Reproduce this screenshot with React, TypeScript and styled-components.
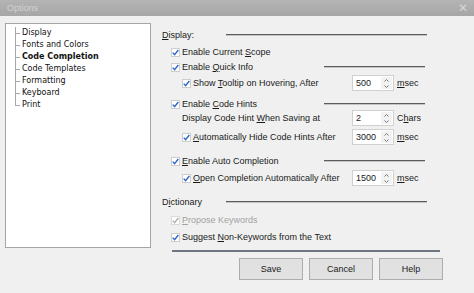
import styled, { createGlobalStyle } from "styled-components";

const GlobalStyle = createGlobalStyle`
  html, body {
    margin: 0;
    padding: 0;
    background: #f0f0f0;
  }
  body {
    font-family: "Liberation Sans", Arial, sans-serif;
  }
`;

const Window = styled.div`
  width: 474px;
  height: 293px;
  display: flex;
  flex-direction: column;
  background: #f0f0f0;
  overflow: hidden;
  color: #1a1a1a;
`;

const TitleBar = styled.div`
  height: 16px;
  flex: 0 0 16px;
  display: flex;
  align-items: center;
  justify-content: space-between;
  padding: 0 6px 0 7px;
  background: linear-gradient(#b4b4b4, #a6a6a6);
  color: #d2d2d2;
  font-size: 9px;
`;

const Close = styled.span`
  font-size: 12px;
  line-height: 1;
  color: #d6d6d6;
`;

const Body = styled.div`
  flex: 1;
  display: flex;
  padding-top: 7px;
  min-height: 0;
`;

const TreeBox = styled.div`
  width: 146px;
  height: 225px;
  margin-left: 5px;
  box-sizing: border-box;
  border: 1px solid #a5a5a5;
  background: #fff;
  padding-top: 3px;
`;

const TreeItem = styled.div<{ $bold?: boolean; $last?: boolean }>`
  position: relative;
  height: 12px;
  line-height: 12px;
  padding-left: 16px;
  font-family: "DejaVu Sans", "Liberation Sans", sans-serif;
  font-size: 8px;
  font-weight: ${(p) => (p.$bold ? 700 : 400)};
  color: #111;
  white-space: nowrap;

  &::before {
    content: "";
    position: absolute;
    left: 9px;
    top: 6px;
    width: 5px;
    border-top: 1px solid #a8a8a8;
  }

  &::after {
    content: "";
    position: absolute;
    left: 9px;
    top: 0;
    height: ${(p) => (p.$last ? "6px" : "12px")};
    border-left: 1px solid #a8a8a8;
  }
`;

const Panel = styled.div`
  flex: 1;
  display: flex;
  flex-direction: column;
  padding-left: 11px;
  padding-top: 4px;
  font-size: 9px;
`;

const Row = styled.div<{ $gap?: number; $indent?: number }>`
  height: 16px;
  display: flex;
  align-items: center;
  margin-top: ${(p) => p.$gap ?? 0}px;
  padding-left: ${(p) => p.$indent ?? 0}px;
  white-space: nowrap;
`;

const SpinRow = styled.div<{ $gap?: number }>`
  height: 16px;
  display: grid;
  grid-template-columns: 190px 42px auto;
  align-items: center;
  margin-top: ${(p) => p.$gap ?? 0}px;
  white-space: nowrap;
`;

const Cell = styled.div<{ $indent?: number }>`
  display: flex;
  align-items: center;
  padding-left: ${(p) => p.$indent ?? 0}px;
`;

const HeaderLabel = styled.span`
  width: 64px;
  flex: 0 0 64px;
`;

const Rule = styled.div`
  flex: 1;
  height: 1px;
  background: #5c5c5c;
  border-bottom: 1px solid #c4c4c4;
  margin-right: 47px;
`;

const SubRule = styled.div`
  width: 101px;
  height: 1px;
  margin-left: auto;
  margin-right: 49px;
  background: #5c5c5c;
  border-bottom: 1px solid #c4c4c4;
`;

const Text = styled.span<{ $disabled?: boolean }>`
  color: ${(p) => (p.$disabled ? "#a3a3a3" : "#1a1a1a")};
`;

const Mn = styled.span`
  text-decoration: underline;
  text-underline-offset: 1px;
`;

const Box = styled.span<{ $disabled?: boolean }>`
  width: 9px;
  height: 9px;
  flex: 0 0 9px;
  box-sizing: border-box;
  margin-right: 2px;
  border: 1px solid ${(p) => (p.$disabled ? "#dadada" : "#cdcdcd")};
  background: #fff;
  display: flex;
  align-items: center;
  justify-content: center;
`;

const Spin = styled.div`
  height: 16px;
  box-sizing: border-box;
  border: 1px solid #d0d0d0;
  background: #fff;
  display: flex;
`;

const SpinValue = styled.span`
  flex: 1;
  padding-left: 3px;
  line-height: 14px;
`;

const SpinArrows = styled.div`
  width: 11px;
  margin: 1px;
  background: #f2f2f2;
  display: flex;
  flex-direction: column;
  align-items: center;
  justify-content: space-around;
`;

const Unit = styled.span`
  padding-left: 3px;
`;

const Separator = styled.div`
  height: 2px;
  margin: 5px 34px 0 10px;
  background: #6d7580;
`;

const Buttons = styled.div`
  display: flex;
  justify-content: flex-end;
  gap: 6px;
  margin-top: 6px;
  margin-right: 31px;
`;

const Button = styled.div`
  width: 64px;
  height: 22px;
  box-sizing: border-box;
  border: 1px solid #adadad;
  background: #e1e1e1;
  display: flex;
  align-items: center;
  justify-content: center;
  font-size: 9px;
`;

function Check({ disabled }: { disabled?: boolean }) {
  return (
    <Box $disabled={disabled}>
      <svg width="7" height="7" viewBox="0 0 7 7">
        <path
          d="M0.7 3.6 L2.6 5.7 L6.3 1"
          stroke={disabled ? "#b0b0b0" : "#2c66c8"}
          strokeWidth="1.4"
          fill="none"
        />
      </svg>
    </Box>
  );
}

function Spinner({ value }: { value: string }) {
  return (
    <Spin>
      <SpinValue>{value}</SpinValue>
      <SpinArrows>
        <svg width="5" height="3" viewBox="0 0 5 3">
          <path d="M0.5 2.5 L2.5 0.5 L4.5 2.5" stroke="#777" fill="none" />
        </svg>
        <svg width="5" height="3" viewBox="0 0 5 3">
          <path d="M0.5 0.5 L2.5 2.5 L4.5 0.5" stroke="#777" fill="none" />
        </svg>
      </SpinArrows>
    </Spin>
  );
}

const pages = ["Display", "Fonts and Colors", "Code Completion", "Code Templates", "Formatting", "Keyboard", "Print"];

export default function App() {
  return (
    <Window>
      <GlobalStyle />
      <TitleBar>
        <span>Options</span>
        <Close>✕</Close>
      </TitleBar>
      <Body>
        <TreeBox>
          {pages.map((p, i) => (
            <TreeItem key={p} $bold={p === "Code Completion"} $last={i === pages.length - 1}>
              {p}
            </TreeItem>
          ))}
        </TreeBox>

        <Panel>
          <Row>
            <HeaderLabel>
              <Mn>D</Mn>isplay:
            </HeaderLabel>
            <Rule />
          </Row>
          <Row $gap={1} $indent={9}>
            <Check />
            <Text>
              Enable Current <Mn>S</Mn>cope
            </Text>
          </Row>
          <Row $gap={-1} $indent={9}>
            <Check />
            <Text>
              Enable <Mn>Q</Mn>uick Info
            </Text>
            <SubRule />
          </Row>
          <SpinRow>
            <Cell $indent={20}>
              <Check />
              <Text>
                Show <Mn>T</Mn>ooltip on Hovering, After
              </Text>
            </Cell>
            <Spinner value="500" />
            <Unit>
              <Mn>m</Mn>sec
            </Unit>
          </SpinRow>
          <Row $gap={5} $indent={9}>
            <Check />
            <Text>
              Enable <Mn>C</Mn>ode Hints
            </Text>
            <SubRule />
          </Row>
          <SpinRow $gap={-2}>
            <Cell $indent={20}>
              <Text>
                Display Code Hint <Mn>W</Mn>hen Saving at
              </Text>
            </Cell>
            <Spinner value="2" />
            <Unit>
              C<Mn>h</Mn>ars
            </Unit>
          </SpinRow>
          <SpinRow $gap={3}>
            <Cell $indent={20}>
              <Check />
              <Text>
                <Mn>A</Mn>utomatically Hide Code Hints After
              </Text>
            </Cell>
            <Spinner value="3000" />
            <Unit>
              <Mn>m</Mn>sec
            </Unit>
          </SpinRow>
          <Row $gap={8} $indent={9}>
            <Check />
            <Text>
              <Mn>E</Mn>nable Auto Completion
            </Text>
            <SubRule />
          </Row>
          <SpinRow $gap={1}>
            <Cell $indent={20}>
              <Check />
              <Text>
                <Mn>O</Mn>pen Completion Automatically After
              </Text>
            </Cell>
            <Spinner value="1500" />
            <Unit>
              <Mn>m</Mn>sec
            </Unit>
          </SpinRow>
          <Row $gap={8}>
            <HeaderLabel>
              D<Mn>i</Mn>ctionary
            </HeaderLabel>
            <Rule />
          </Row>
          <Row $gap={2} $indent={9}>
            <Check disabled />
            <Text $disabled>
              <Mn>P</Mn>ropose Keywords
            </Text>
          </Row>
          <Row $gap={1} $indent={9}>
            <Check />
            <Text>
              Suggest <Mn>N</Mn>on-Keywords from the Text
            </Text>
          </Row>
          <Separator />
          <Buttons>
            <Button>Save</Button>
            <Button>Cancel</Button>
            <Button>Help</Button>
          </Buttons>
        </Panel>
      </Body>
    </Window>
  );
}
